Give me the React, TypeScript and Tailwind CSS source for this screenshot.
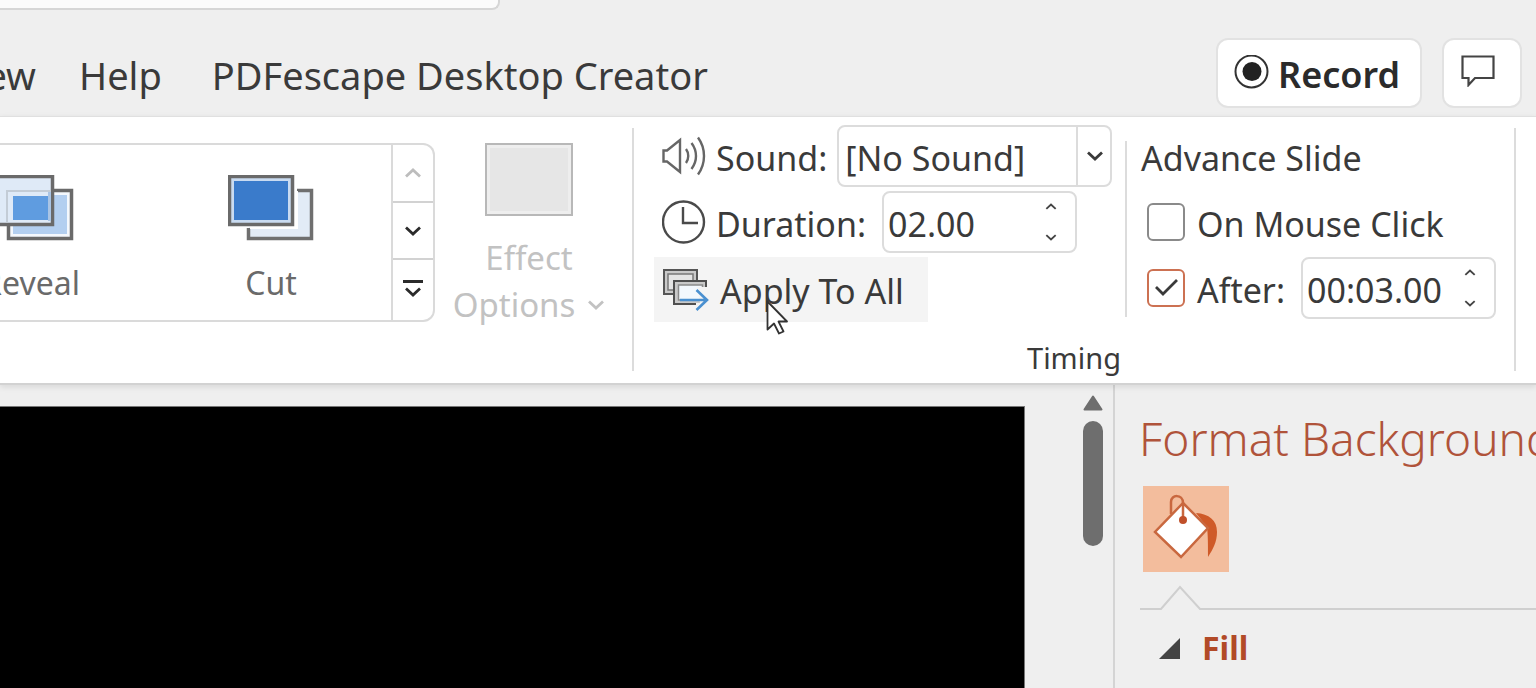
import { useState } from "react";
import type { ReactNode } from "react";

function Chevron({ up = false, className = "" }: { up?: boolean; className?: string }) {
  return (
    <svg viewBox="0 0 18 10" fill="none" stroke="currentColor" className={className}>
      <path d={up ? "M2 8.5 9 2l7 6.5" : "M2 1.5 9 8l7-6.5"} strokeWidth="2.8" />
    </svg>
  );
}

function RevealIcon() {
  return (
    <svg viewBox="0 0 86 66" className="w-[86px] h-[66px]">
      <rect x="20.5" y="15.5" width="63" height="48" fill="#f4f8fd" stroke="#6a6a6a" strokeWidth="3.5" />
      <rect x="25" y="20" width="54" height="39" fill="#b3cff0" />
      <rect x="1.5" y="1.5" width="63" height="48" fill="#dfeaf7" stroke="#6a6a6a" strokeWidth="3.5" />
      <path d="M19 48V16h44" fill="none" stroke="#c3ccd6" strokeWidth="2" />
      <rect x="25" y="21" width="35" height="24" fill="#5f9ce0" />
      <path d="M60 17h3v29h-3z" fill="#a9c4e4" />
    </svg>
  );
}

function CutIcon() {
  return (
    <svg viewBox="0 0 86 66" className="w-[86px] h-[66px]">
      <path d="M20.5 53V63.5h63v-48H69" fill="#e2ebf6" stroke="#6f6f6f" strokeWidth="3.5" />
      <path d="M66 16h4v38H22v-3h44z" fill="#fff" />
      <rect x="1.5" y="1.5" width="63" height="48" fill="#c9dbf1" stroke="#6a6a6a" strokeWidth="3.5" />
      <rect x="6" y="6" width="54" height="39" fill="#3a7bcb" />
    </svg>
  );
}

function SpeakerIcon() {
  return (
    <svg viewBox="0 0 44 40" fill="none" stroke="#666" strokeWidth="2.4" className="w-11 h-10">
      <path d="M1.500 14.500H5L18 4v32L5 25.500H1.500z" />
      <path d="M24 13c3 4 3 10 0 14" />
      <path d="M29.500 7c6 8 6 18 0 26" />
      <path d="M36 1.500c8 11 8 26 0 37" />
    </svg>
  );
}

function ClockIcon() {
  return (
    <svg viewBox="0 0 44 44" fill="none" stroke="#4a4a4a" strokeWidth="2.400" className="w-11 h-11">
      <circle cx="21.500" cy="22" r="20.500" />
      <path d="M21 7v16h15" />
    </svg>
  );
}

function ApplyIcon() {
  return (
    <svg viewBox="0 0 48 44" fill="none" className="w-12 h-11">
      <rect x="2" y="2" width="33" height="24" fill="#c9c9c9" stroke="#555" strokeWidth="2" />
      <rect x="6" y="6" width="25" height="16" fill="#e4e4e4" stroke="#777" strokeWidth="1.500" />
      <rect x="12" y="13" width="32" height="23" fill="#c9c9c9" stroke="#4f4f4f" strokeWidth="2" />
      <rect x="16.500" y="17" width="24" height="15" fill="#f3f8fd" stroke="#8a8a8a" strokeWidth="1.500" />
      <path d="M35 19h11v25H34v-9h4z" fill="#f4f4f4" />
      <path d="M18 32h27M34.500 22 45 32 34.500 42" stroke="#4a90d0" strokeWidth="2.600" />
    </svg>
  );
}

function FillIcon() {
  return (
    <svg viewBox="0 0 86 86" fill="none" className="w-[86px] h-[86px]">
      <path d="M53 27c13 1 21 7 21 19 0 10-4 17-9 25 0-13 0-21-1-30z" fill="#cf5a28" />
      <path d="M40 17 65 42 38 71 12 46z" fill="#fff" stroke="#c9683f" strokeWidth="2.500" />
      <path d="M28 28V16c0-8 12-8 12 1v17" stroke="#c9683f" strokeWidth="2.500" />
      <circle cx="40" cy="34" r="4" fill="#c0502a" />
    </svg>
  );
}

function Cursor() {
  return (
    <svg viewBox="0 0 24 36" className="absolute left-[112px] top-[43px] w-6 h-9">
      <path
        d="M1.500 1.500v28l6.500-6 5 10 4.500-2-5-10H21z"
        fill="#fff"
        stroke="#333"
        strokeWidth="1.800"
        strokeLinejoin="round"
      />
    </svg>
  );
}

function GalleryItem({ label, icon }: { label: string; icon: ReactNode }) {
  return (
    <button className="w-[240px] shrink-0 flex flex-col items-center pt-[30px]">
      {icon}
      <span className="mt-[22px] text-[32px] leading-10 text-[#6a6a6a]">{label}</span>
    </button>
  );
}

type SpinProps = { id: string; label: string; value: string; onChange: (v: string) => void };

function SpinBox({ id, label, value, onChange }: SpinProps) {
  return (
    <div className="flex w-[195px] h-[62px] bg-white border-2 border-[#dcdcdc] rounded-lg">
      <input
        id={id}
        type="text"
        aria-label={label}
        value={value}
        onChange={(e) => onChange(e.target.value)}
        className="flex-1 min-w-0 pl-1 pt-1 text-[34px] text-[#3a3a3a] outline-none"
      />
      <div className="flex flex-col justify-between w-8 py-[10px] pl-[2px] text-[#444]">
        <button aria-label={`Increase ${label}`}>
          <Chevron up className="w-3 h-[7px]" />
        </button>
        <button aria-label={`Decrease ${label}`} className="flex items-end">
          <Chevron className="w-3 h-[7px]" />
        </button>
      </div>
    </div>
  );
}

function CheckBox({ id, checked, onChange }: { id: string; checked: boolean; onChange: (v: boolean) => void }) {
  return (
    <span className="relative flex size-[38px]">
      <input
        id={id}
        type="checkbox"
        checked={checked}
        onChange={(e) => onChange(e.target.checked)}
        className="appearance-none size-full bg-white border-2 border-[#8a8a8a] checked:border-[#cc7152] rounded-md"
      />
      {checked && (
        <svg viewBox="0 0 38 38" fill="none" className="absolute inset-0 pointer-events-none">
          <path d="M9 18l7 7 14-14" stroke="#3a3a3a" strokeWidth="2.800" />
        </svg>
      )}
    </span>
  );
}

export default function App() {
  const [sound, setSound] = useState("[No Sound]");
  const [duration, setDuration] = useState("02.00");
  const [after, setAfter] = useState("00:03.00");
  const [onClick, setOnClick] = useState(false);
  const [onTimer, setOnTimer] = useState(true);

  return (
    <div className="flex flex-col h-screen overflow-hidden bg-[#efefef] text-[#3a3a3a] font-['Noto_Sans','Open_Sans',sans-serif] whitespace-nowrap">
      {/* Title bar and tabs */}
      <header className="shrink-0">
        <div className="w-[500px] h-[10px] bg-[#fbfbfb] border-b-2 border-r-2 border-[#d6d6d6] rounded-br-lg" />
        <div className="flex items-start justify-between h-[106px] pt-7 pr-[14px]">
          <nav className="flex items-center h-[70px] pt-1 text-[38px]">
            <a href="#view" className="flex justify-end w-9 mr-[43px] overflow-hidden">View</a>
            <a href="#help" className="mr-[50px]">Help</a>
            <a href="#pdfescape">PDFescape Desktop Creator</a>
          </nav>
          <div className="flex gap-5">
            <button className="flex items-center gap-2 h-[70px] pl-4 pr-5 bg-white border-2 border-[#e2e2e2] rounded-xl">
              <svg viewBox="0 0 36 36" className="w-9 h-9">
                <circle cx="17.500" cy="16.500" r="16" fill="none" stroke="#333" strokeWidth="2" />
                <circle cx="18" cy="16.500" r="9.500" fill="#222" />
              </svg>
              <span className="pt-1 text-[36px] font-semibold text-[#2b2b2b]">Record</span>
            </button>
            <button aria-label="Comments" className="flex items-center justify-center w-20 h-[70px] pr-2 pb-1 bg-white border-2 border-[#e2e2e2] rounded-xl">
              <svg viewBox="0 0 34 32" fill="none" className="w-[34px] h-8">
                <path d="M1.500 1.500h31v21.500H14L7.500 30v-7h-6z" stroke="#444" strokeWidth="2.200" />
              </svg>
            </button>
          </div>
        </div>
      </header>

      {/* Ribbon */}
      <section className="relative shrink-0 flex items-start h-[269px] bg-white border-t border-b-2 border-t-[#e0e0e0] border-b-[#d2d2d2] shadow-[0_2px_6px_rgba(0,0,0,0.1)]">
        <div className="flex shrink-0 w-[435px] h-[179px] mt-[26px] border-2 border-l-0 border-[#dadada] rounded-r-xl overflow-hidden">
          <div className="flex flex-1 min-w-0 justify-end overflow-hidden">
            <GalleryItem label="Reveal" icon={<RevealIcon />} />
            <GalleryItem label="Cut" icon={<CutIcon />} />
          </div>
          <div className="flex flex-col w-[42px] border-l-2 border-[#dadada]">
            <button aria-label="Previous row" className="flex flex-1 items-center justify-center border-b-2 border-[#d2d2d2] text-[#bdbdbd]">
              <Chevron up className="w-[18px] h-[10px]" />
            </button>
            <button aria-label="Next row" className="flex flex-1 items-center justify-center border-b-2 border-[#d2d2d2] text-[#2b2b2b]">
              <Chevron className="w-[18px] h-[10px]" />
            </button>
            <button aria-label="More transitions" className="flex flex-1 flex-col items-center justify-center gap-1 pb-1 text-[#2b2b2b]">
              <span className="w-5 h-[3px] bg-[#2b2b2b]" />
              <Chevron className="w-[18px] h-[10px]" />
            </button>
          </div>
        </div>

        <button disabled className="flex flex-col shrink-0 items-center w-[160px] ml-[14px] mt-[26px] text-[33px] leading-[47px] text-[#c2c2c2]">
          <span className="w-[88px] h-[73px] border-2 border-[#b8b8b8] bg-[#e6e6e6] shadow-[inset_0_0_0_3px_#eeeeee]" />
          <span className="mt-[18px]">Effect</span>
          <span className="flex items-center gap-3">
            Options
            <Chevron className="w-[18px] h-[10px]" />
          </span>
        </button>

        <div className="w-[2px] h-[243px] ml-[23px] mt-[11px] bg-[#dcdcdc]" />

        {/* Timing */}
        <div className="flex flex-col shrink-0 w-[880px] pt-2 text-[34px]">
          <div className="flex">
            <div className="flex flex-col gap-1 w-[491px] pl-5">
              <div className="flex items-center h-[62px] pl-2">
                <SpeakerIcon />
                <label htmlFor="sound" className="ml-[10px] mr-[10px] pt-1">Sound:</label>
                <div className="relative w-[275px] h-[62px]">
                  <select
                    id="sound"
                    value={sound}
                    onChange={(e) => setSound(e.target.value)}
                    className="appearance-none size-full pl-[6px] pt-1 bg-white border-2 border-[#dcdcdc] rounded-lg"
                  >
                    <option>[No Sound]</option>
                    <option>Applause</option>
                    <option>Chime</option>
                  </select>
                  <span className="absolute right-0 inset-y-0 flex items-center justify-center w-9 border-l-2 border-[#dcdcdc] pointer-events-none">
                    <Chevron className="w-[18px] h-[10px]" />
                  </span>
                </div>
              </div>
              <div className="flex items-center h-[62px] pl-2">
                <ClockIcon />
                <label htmlFor="duration" className="ml-[10px] mr-4 pt-1">Duration:</label>
                <SpinBox id="duration" label="Duration" value={duration} onChange={setDuration} />
              </div>
              <button className="relative flex items-center self-start h-[65px] pl-2 pr-6 bg-[#f4f4f4]">
                <ApplyIcon />
                <span className="ml-[10px] pt-1">Apply To All</span>
                <Cursor />
              </button>
            </div>
            <div className="w-[2px] h-[176px] mt-4 bg-[#dcdcdc]" />
            <div className="flex flex-col gap-1 pl-[14px]">
              <p className="flex items-center h-[62px] pt-1">Advance Slide</p>
              <div className="flex items-center h-[62px] pl-[6px]">
                <CheckBox id="on-click" checked={onClick} onChange={setOnClick} />
                <label htmlFor="on-click" className="ml-3 pt-1">On Mouse Click</label>
              </div>
              <div className="flex items-center h-[62px] pl-[6px]">
                <CheckBox id="after" checked={onTimer} onChange={setOnTimer} />
                <label htmlFor="after" className="ml-3 mr-4 pt-1">After:</label>
                <SpinBox id="after-time" label="After" value={after} onChange={setAfter} />
              </div>
            </div>
          </div>
          <p className="mt-[18px] text-center text-[29px] leading-9">Timing</p>
        </div>

        <div className="w-[2px] h-[243px] mt-[11px] bg-[#dcdcdc]" />
      </section>

      {/* Slide and format pane */}
      <main className="flex flex-1 min-h-0">
        <div className="flex flex-1 min-w-0 pt-[21px]">
          <div className="flex-1 bg-black border-t border-r border-[#777]" />
        </div>
        <div className="flex flex-col items-center w-[88px] pl-12 pt-[10px]">
          <svg viewBox="0 0 20 16" className="w-5 h-4">
            <path d="M10 1.500 18.500 14.500h-17z" fill="#6e6e6e" stroke="#6e6e6e" strokeWidth="2" strokeLinejoin="round" />
          </svg>
          <div className="w-5 h-[125px] mt-[10px] bg-[#6e6e6e] rounded-full" />
        </div>
        <aside className="w-[423px] pl-6 pt-5 border-l-2 border-[#d4d4d4] overflow-hidden">
          <h2 className="text-[46px] leading-[66px] font-light text-[#b0533a]">Format Background</h2>
          <button aria-label="Fill" className="flex ml-1 mt-[15px] bg-[#f3bd9d]">
            <FillIcon />
          </button>
          <div className="flex mt-3">
            <svg viewBox="0 0 62 26" fill="none" className="w-[62px] h-[26px]">
              <path d="M1 25h21L41 3l20 22h1" stroke="#cfcfcf" strokeWidth="2" />
            </svg>
            <div className="flex-1 border-b-2 border-[#cfcfcf]" />
          </div>
          <button aria-expanded="true" className="flex items-center gap-[22px] mt-[15px] pl-5">
            <svg viewBox="0 0 21 21" className="w-[21px] h-[21px]">
              <path d="M21 0v21H0z" fill="#444" />
            </svg>
            <span className="text-[32px] leading-[46px] font-bold text-[#b24a27]">Fill</span>
          </button>
        </aside>
      </main>
    </div>
  );
}
